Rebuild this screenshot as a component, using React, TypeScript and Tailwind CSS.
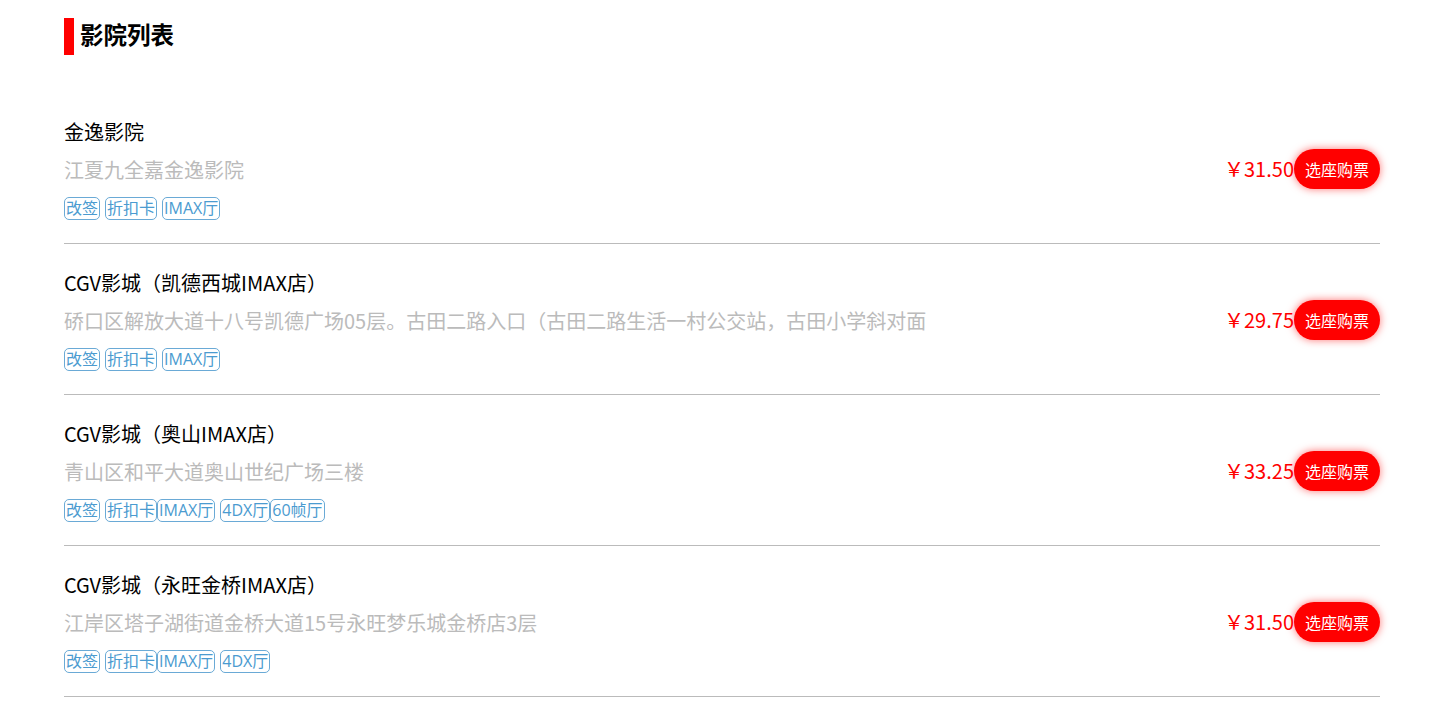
import React from "react";

type Tag = { label: string; gap?: boolean };

function Cinema({
  name,
  address,
  price,
  tags,
}: {
  name: string;
  address: string;
  price: string;
  tags: Tag[];
}) {
  return (
    <div className="flex items-center border-b border-[#bbbbbb] pt-6 pb-[23px]">
      <div className="flex-1 min-w-0">
        <div className="h-[30px] leading-[30px] text-[20px] text-black">{name}</div>
        <div className="mt-2 h-[30px] leading-[30px] text-[20px] text-[#bbbbbb]">{address}</div>
        <div className="mt-3 flex h-[23px] font-['Open_Sans','Noto_Sans_CJK_SC',sans-serif]">
          {tags.map((t, i) => (
            <span
              key={i}
              className={
                "h-[23px] leading-[21px] border border-[#6aaad6] rounded-[5px] text-[16px] text-[#4b9bd0] px-[1px] " +
                (t.gap ? "ml-[5px]" : "")
              }
            >
              {t.label}
            </span>
          ))}
        </div>
      </div>
      <div className="flex items-center">
        <span className="text-[20px] text-[#ff0000]">￥{price}</span>
        <button className="h-10 px-[11px] rounded-full bg-[#ff0000] text-white text-[16px] shadow-[0_0_8px_rgba(255,0,0,0.55)]">
          选座购票
        </button>
      </div>
    </div>
  );
}

function App() {
  const cinemas = [
    {
      name: "金逸影院",
      address: "江夏九全嘉金逸影院",
      price: "31.50",
      tags: [{ label: "改签" }, { label: "折扣卡", gap: true }, { label: "IMAX厅", gap: true }],
    },
    {
      name: "CGV影城（凯德西城IMAX店）",
      address: "硚口区解放大道十八号凯德广场05层。古田二路入口（古田二路生活一村公交站，古田小学斜对面",
      price: "29.75",
      tags: [{ label: "改签" }, { label: "折扣卡", gap: true }, { label: "IMAX厅", gap: true }],
    },
    {
      name: "CGV影城（奥山IMAX店）",
      address: "青山区和平大道奥山世纪广场三楼",
      price: "33.25",
      tags: [
        { label: "改签" },
        { label: "折扣卡", gap: true },
        { label: "IMAX厅" },
        { label: "4DX厅", gap: true },
        { label: "60帧厅" },
      ],
    },
    {
      name: "CGV影城（永旺金桥IMAX店）",
      address: "江岸区塔子湖街道金桥大道15号永旺梦乐城金桥店3层",
      price: "31.50",
      tags: [
        { label: "改签" },
        { label: "折扣卡", gap: true },
        { label: "IMAX厅" },
        { label: "4DX厅", gap: true },
      ],
    },
  ];

  return (
    <div className="min-h-screen bg-white pl-16 pr-[60px] font-['Noto_Sans_CJK_SC','Noto_Sans',sans-serif]">
      <div className="flex items-center mt-[18px] mb-[38px] h-[37px]">
        <div className="w-[10px] h-[37px] bg-[#ff0000]"></div>
        <h1 className="ml-[6px] mb-[4px] text-[23.5px] font-bold text-black leading-[37px]">影院列表</h1>
      </div>
      {cinemas.map((c, i) => (
        <Cinema key={i} name={c.name} address={c.address} price={c.price} tags={c.tags} />
      ))}
    </div>
  );
}

export default App;
